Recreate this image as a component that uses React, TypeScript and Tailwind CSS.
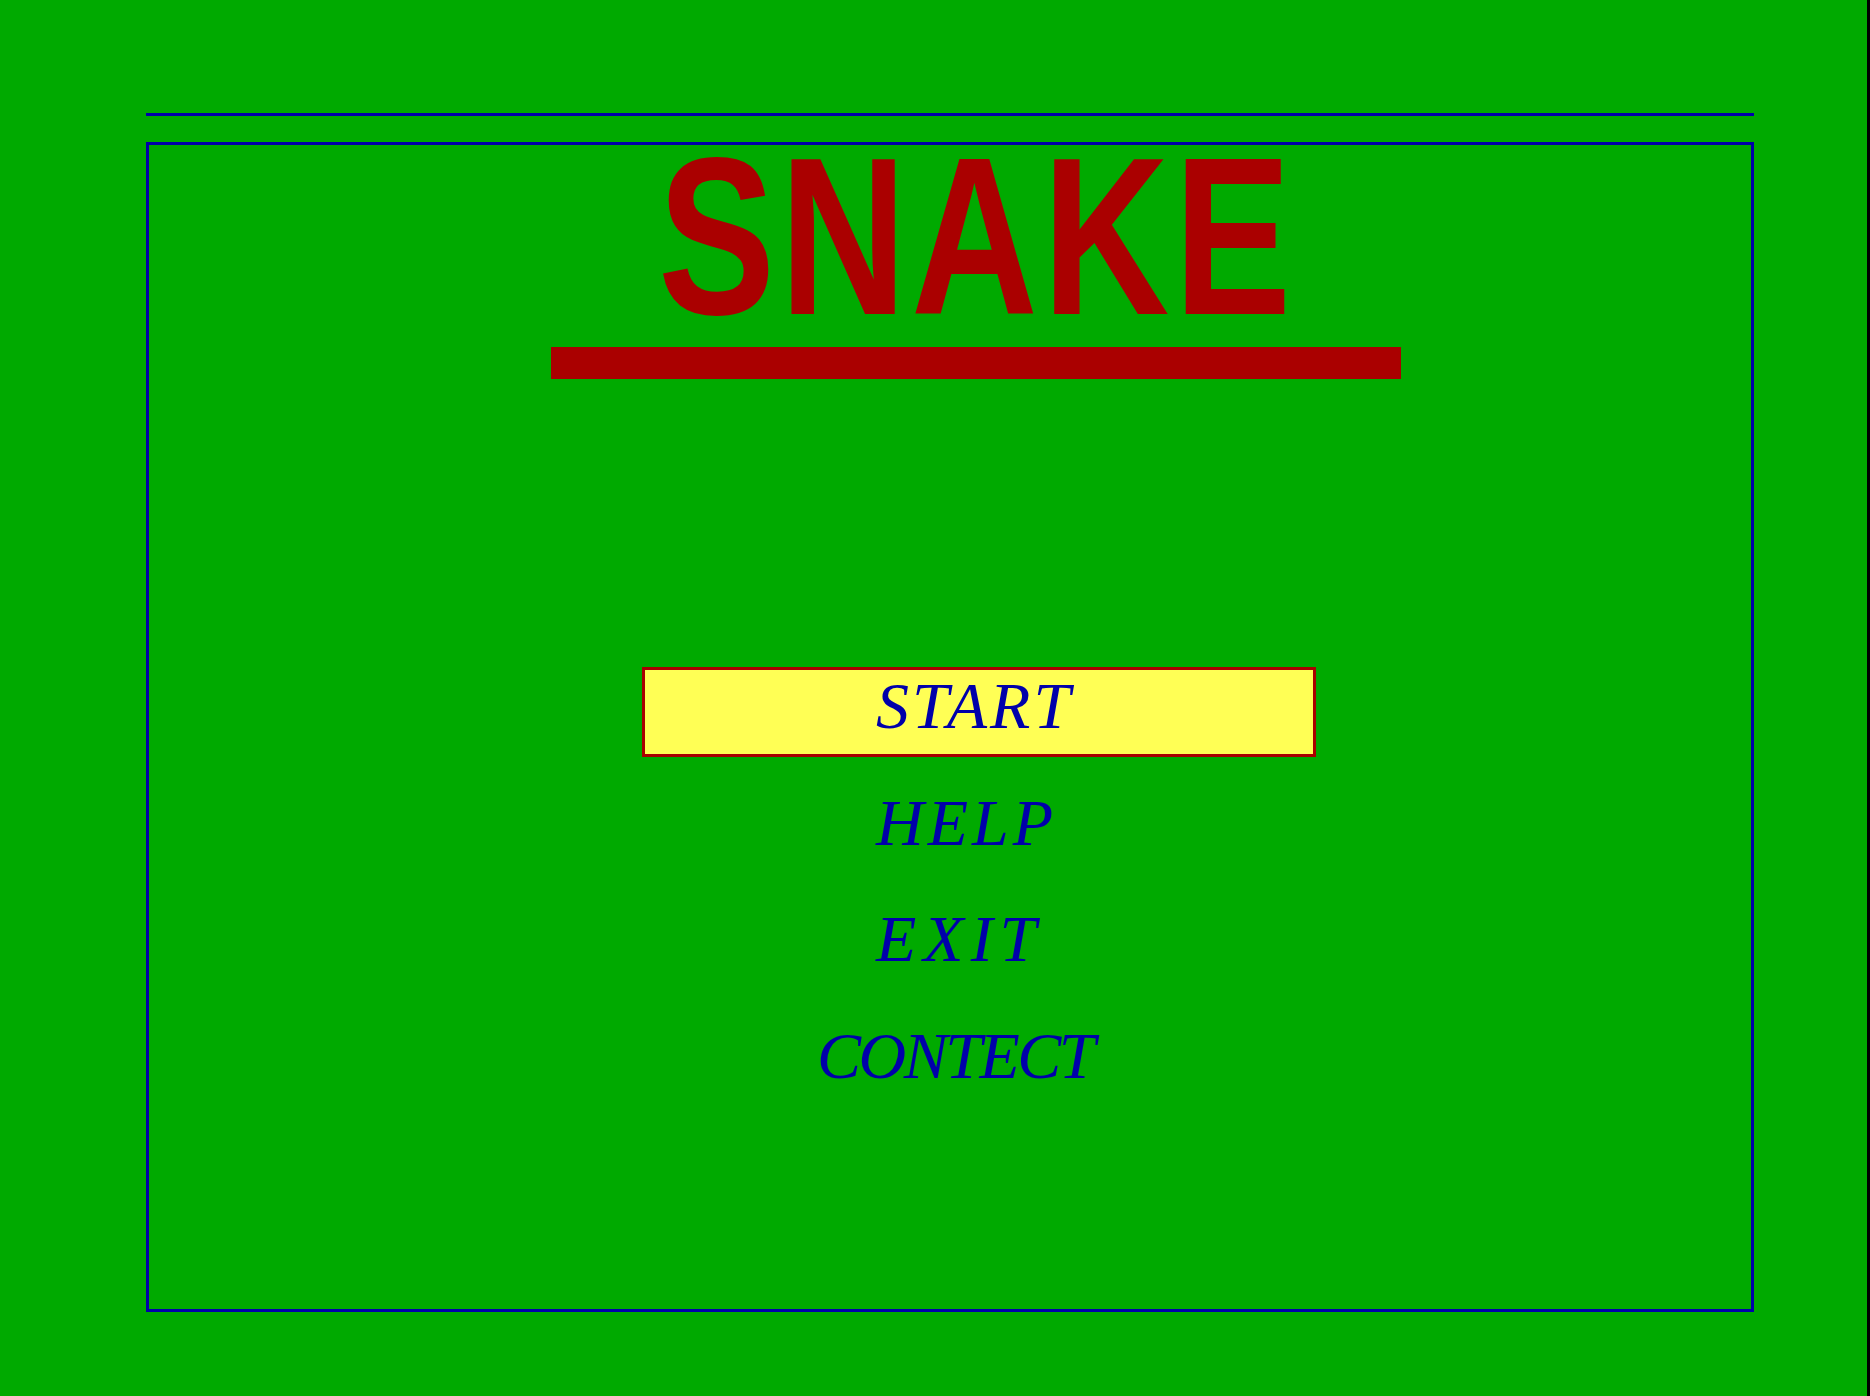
import React from "react";

const menuText =
  "font-['Liberation_Serif','Times_New_Roman',serif] italic text-[66px] leading-[66px] text-[#0000AA] whitespace-nowrap";

export default function App() {
  return (
    <div className="flex h-[1396px] w-[1870px] bg-black">
      <div className="h-full w-[1867px] bg-[#00AA00] pl-[146px] pt-[113px]">
        {/* header rule */}
        <div className="h-[3px] w-[1608px] bg-[#0000AA]" />

        {/* main frame */}
        <div className="mt-[26px] flex h-[1170px] w-[1608px] flex-col border-[3px] border-[#0000AA]">
          {/* title */}
          <div className="mt-[10px] flex h-[164px] justify-center overflow-visible">
            <span className="ml-[54px] inline-block scale-x-[0.78] font-['Liberation_Sans',Arial,sans-serif] text-[225px] font-bold leading-[162px] tracking-[6px] text-[#AA0000]">
              SNAKE
            </span>
          </div>
          <div className="ml-[402px] mt-[28px] h-[32px] w-[850px] bg-[#AA0000]" />

          {/* menu */}
          <div className="ml-[493px] mt-[288px] h-[90px] w-[674px] border-[3px] border-[#AA0000] bg-[#FFFF55] pl-[231px] pt-[3px]">
            <div className={`${menuText} tracking-[3px]`}>START</div>
          </div>
          <div className={`${menuText} ml-[727px] mt-[33px] h-[66px] tracking-[4px]`}>HELP</div>
          <div className={`${menuText} ml-[727px] mt-[50px] h-[66px] tracking-[7px]`}>EXIT</div>
          <div className={`${menuText} ml-[668px] mt-[51px] h-[66px] tracking-[-2.5px]`}>CONTECT</div>
        </div>
      </div>
    </div>
  );
}
